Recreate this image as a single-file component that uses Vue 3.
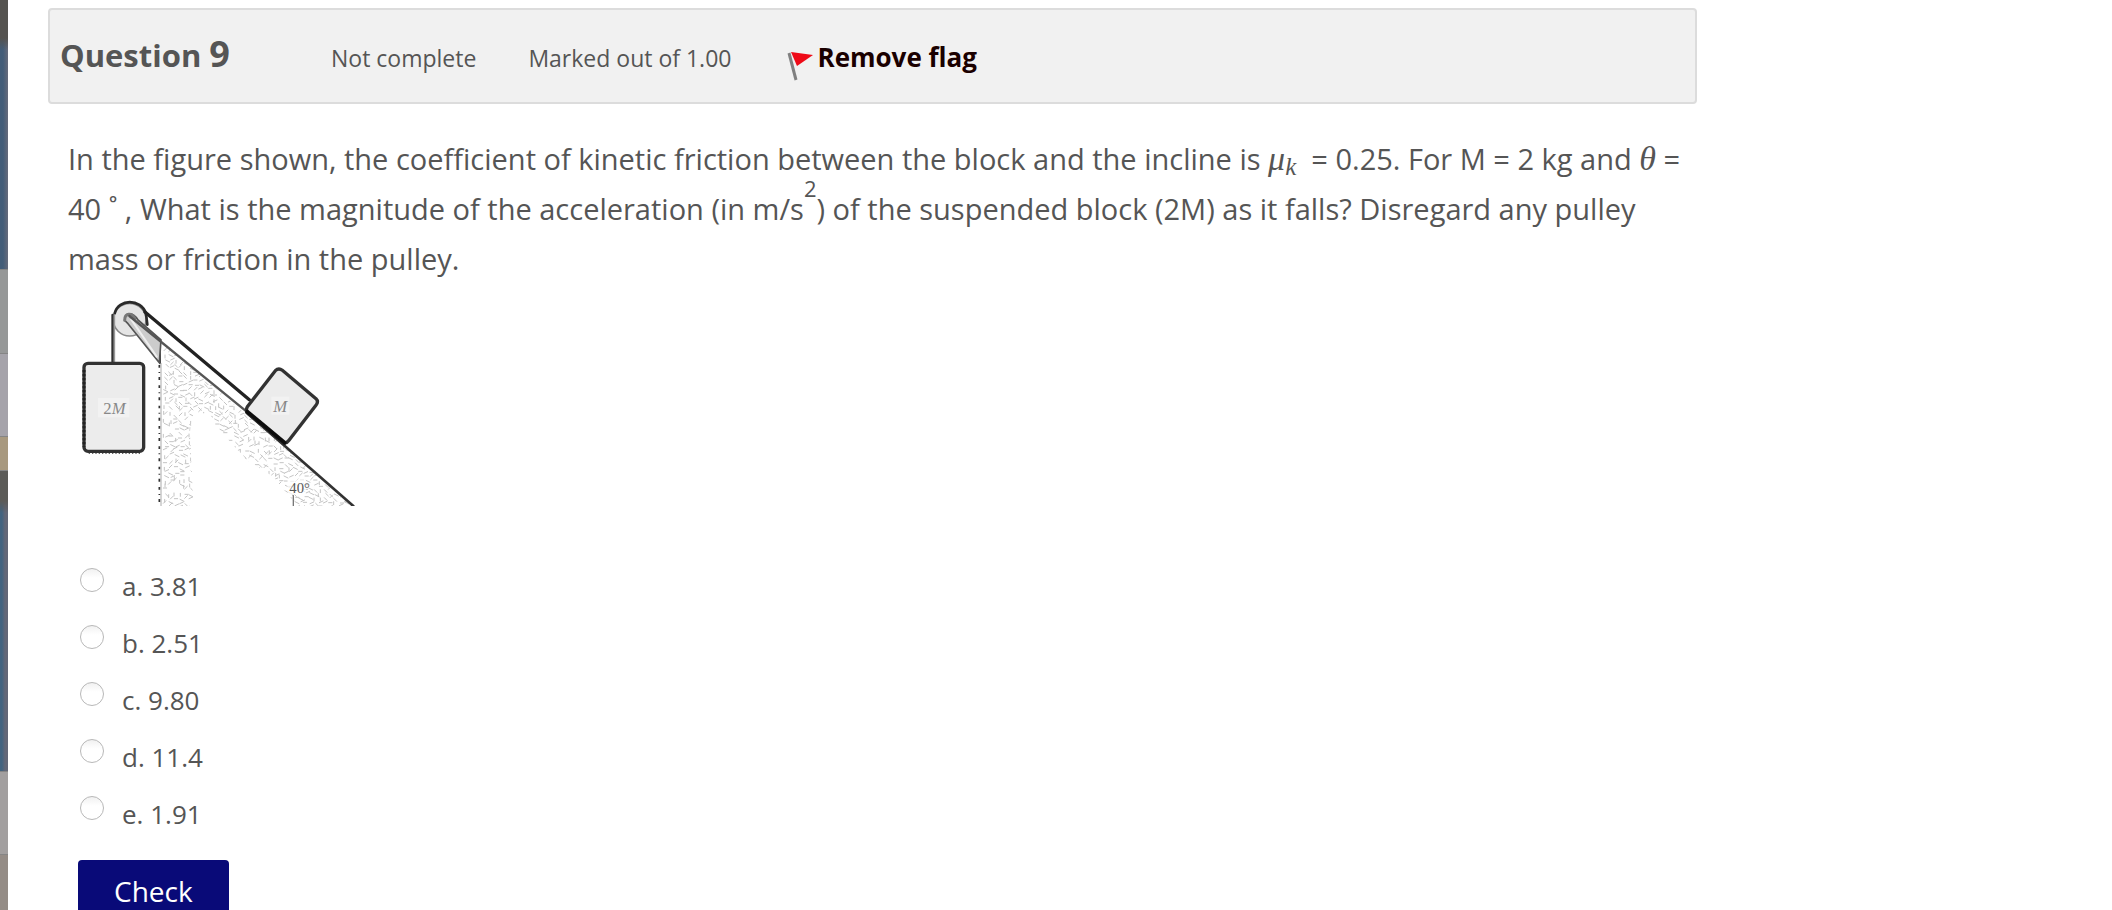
<script setup>
import { ref } from 'vue'

const answer = ref('')
const options = [
  { id: 'a', value: '3.81' },
  { id: 'b', value: '2.51' },
  { id: 'c', value: '9.80' },
  { id: 'd', value: '11.4' },
  { id: 'e', value: '1.91' }
]

// Stipple texture of the incline: short grey strokes in several directions.
let seed = 11
const random = () => {
  seed = (seed * 16807) % 2147483647
  return seed / 2147483647
}
const directions = [[10, 0], [8, 8], [8, -8], [0, 9], [12, 6], [11, -5]]
const grains = []
for (let y = 165; y < 650; y += 13) {
  for (let x = 310; x < 880; x += 15) {
    const [dx, dy] = directions[Math.floor(random() * directions.length)]
    const px = Math.round(x + random() * 8)
    const py = Math.round(y + random() * 8)
    if (random() > 0.1) grains.push(`M${px} ${py}l${dx} ${dy}`)
  }
}
const texture = grains.join('')
</script>

<template>
  <div class="page">
    <div class="backdrop" aria-hidden="true">
      <span class="stone dark"></span>
      <span class="stone grey"></span>
      <span class="stone lilac"></span>
      <span class="stone sand"></span>
      <span class="stone steel"></span>
      <span class="stone pale"></span>
      <span class="stone brown"></span>
    </div>
    <main class="question">
      <header class="info">
        <h1 class="title">Question <span class="number">9</span></h1>
        <span class="state">Not complete</span>
        <span class="grade">Marked out of 1.00</span>
        <a class="flag" href="#"><svg class="flag-icon" viewBox="0 0 28 32" aria-hidden="true">
          <path d="M2 4L9 31" stroke="#808080" stroke-width="3" />
          <path d="M4 3L26 6L10 17Z" fill="#ee0a17" />
        </svg>Remove flag</a>
      </header>

      <form class="content" @submit.prevent>
        <p class="text">
          In the figure shown, the coefficient of kinetic friction between the block and the incline is
          <span class="math">μ<sub>k</sub></span>&nbsp; = 0.25. For M = 2 kg and <i class="math">θ</i> =
          40&nbsp;˚&nbsp;, What is the magnitude of the acceleration (in m/s<sup>2</sup>) of the suspended block (2M) as
          it falls? Disregard any pulley mass or friction in the pulley.
        </p>

        <svg class="figure" viewBox="24 24 876 624" role="img" aria-label="Two blocks joined over a pulley on an incline">
          <defs>
            <clipPath id="wedge">
              <path d="M303 155L880 648H712L640 560L560 510L465 405L450 370H400L390 425L400 648H303Z" />
            </clipPath>
            <filter id="soft" x="-5%" y="-5%" width="110%" height="110%">
              <feGaussianBlur stdDeviation="2" />
            </filter>
          </defs>
          <g filter="url(#soft)" fill="none" stroke-linecap="round" stroke-linejoin="round">
            <path :d="texture" clip-path="url(#wedge)" stroke="#c4c4c4" stroke-width="3" />
            <path d="M300 150V220" stroke="#444" stroke-width="6" />
            <path d="M303 220V648" stroke="#aaa" stroke-width="3" />
            <path d="M298 225V648" stroke="#333" stroke-width="5" stroke-dasharray="8 13 3 12 9 16" stroke-linecap="butt" />
            <circle cx="209" cy="89" r="49" fill="#e5e5e5" stroke="#888" stroke-width="5" />
            <path d="M164 70C176 25 242 25 258 70L262 104" stroke="#2b2b2b" stroke-width="8" />
            <path d="M194 91C194 66 219 64 234 90L303 150L298 218L204 101Z" fill="#ccc" stroke="#555" stroke-width="5" />
            <path d="M194 91C194 68 216 67 224 86" stroke="#777" stroke-width="9" />
            <path d="M214 89L290 200" stroke="#eee" stroke-width="6" />
            <path d="M208 78L560 365" stroke="#555" stroke-width="7" />
            <path d="M255 66L568 329" stroke="#222" stroke-width="10" />
            <path d="M158 75V218" stroke="#333" stroke-width="8" />
            <path d="M163 75V218" stroke="#999" stroke-width="5" />
            <path d="M560 368L880 648" stroke="#333" stroke-width="8" />
            <rect x="72" y="220" width="179" height="264" rx="12" fill="#ececec" stroke="#333" stroke-width="10" />
            <path d="M72 240V470" stroke="#222" stroke-width="9" stroke-dasharray="7 5" stroke-linecap="butt" />
            <path d="M86 487H240" stroke="#333" stroke-width="8" stroke-dasharray="4 6" stroke-linecap="butt" />
            <path d="M646 242Q656 232 667 241L768 326Q776 334 769 344L687 451Q677 465 663 454L566 372Q555 363 562 350Z" fill="#ececec" stroke="#333" stroke-width="10" />
            <path d="M562 365L674 458" stroke="#111" stroke-width="12" />
            <rect x="114" y="324" width="94" height="58" fill="#f2f2f2" />
            <rect x="634" y="320" width="54" height="54" fill="#f2f2f2" />
            <path d="M700 616V648" stroke="#777" stroke-width="4" />
            <rect x="682" y="568" width="56" height="46" fill="#fff" fill-opacity="0.7" />
          </g>
          <g class="labels">
            <text x="130" y="371">2<tspan class="slanted">M</tspan></text>
            <text x="640" y="365" class="slanted">M</text>
            <text x="688" y="608" class="angle">40°</text>
          </g>
        </svg>

        <div class="answers" role="radiogroup" aria-label="Answer">
          <div v-for="option in options" :key="option.id" class="answer">
            <input :id="`answer-${option.id}`" v-model="answer" type="radio" name="answer" :value="option.id" />
            <label :for="`answer-${option.id}`">{{ option.id }}. {{ option.value }}</label>
          </div>
        </div>

        <button class="check" type="submit">Check</button>
      </form>
    </main>
  </div>
</template>

<style>
body {
  margin: 0;
  background: #fff;
}
</style>

<style scoped>
.page {
  display: flex;
  height: 100vh;
  overflow-y: auto;
  scrollbar-width: none;
  color: #555;
  font-family: "Open Sans", "Noto Sans", sans-serif;
}

.backdrop {
  display: flex;
  flex: 0 0 8px;
  flex-direction: column;
  height: 100vh;
}

.stone {
  flex: 83 0 0;
  border-bottom: 1px solid #858585;
  box-sizing: border-box;
}

.dark {
  flex-grow: 271;
  background: linear-gradient(#555350 0 38px, transparent 50px), linear-gradient(90deg, #435d78 3px, #666b7b);
}

.grey {
  background: #969898;
}

.lilac {
  background: #a5a3aa;
}

.sand {
  flex-grow: 33;
  background: #a8997f;
}

.steel {
  flex-grow: 302;
  background: linear-gradient(#5c5b58 0 30px, transparent 42px), linear-gradient(90deg, #42637f 2px, #626777 5px);
}

.pale {
  background: #a29f9f;
}

.brown {
  flex-grow: 55;
  border-bottom: 0;
  background: #948c86;
}

.question {
  flex: 1;
  margin: 8px 415px 0 40px;
}

.info {
  display: flex;
  align-items: baseline;
  box-sizing: border-box;
  height: 96px;
  padding: 20px 10px 0;
  border: 2px solid #dcdcdc;
  border-radius: 4px;
  background: #f1f1f1;
  font-size: 23px;
}

.title {
  width: 271px;
  margin: 0;
  font-size: 31px;
  line-height: 48px;
}

.number {
  font-size: 36px;
}

.grade {
  margin-left: 52px;
}

.flag {
  margin-left: 56px;
  color: #1a0000;
  font-size: 26px;
  font-weight: 700;
  text-decoration: none;
}

.flag-icon {
  width: 28px;
  height: 32px;
  margin-right: 2px;
  vertical-align: -14px;
}

.content {
  display: flex;
  flex-direction: column;
  align-items: flex-start;
  padding: 30px 0 30px 20px;
}

.text {
  margin: 0;
  font-size: 29px;
  line-height: 50px;
}

.math {
  font-family: "Liberation Serif", serif;
  font-size: 34px;
  font-style: italic;
  line-height: 1;
}

sub,
sup {
  font-size: 22px;
  line-height: 0;
}

sub {
  font-size: 25px;
  vertical-align: -5px;
}

sup {
  vertical-align: 23px;
}

.figure {
  width: 292px;
  height: 208px;
  margin-top: 14px;
}

.labels {
  fill: #888;
  font-family: "Liberation Serif", serif;
  font-size: 50px;
}

.slanted {
  font-style: italic;
}

.angle {
  fill: #555;
  font-size: 44px;
}

.answers {
  margin: 54px 0 0 12px;
}

.answer {
  display: flex;
  align-items: flex-start;
  height: 57px;
}

.answer input {
  appearance: none;
  width: 24px;
  height: 24px;
  margin: 8px 18px 0 0;
  border: 1px solid #b8b8b8;
  border-radius: 50%;
  background: linear-gradient(#f1f1f1, #fff 40%);
}

.answer input:checked {
  background: radial-gradient(#090a78 5px, #fff 6px);
}

.answer label {
  padding-top: 8px;
  font-size: 26px;
  line-height: 36px;
}

.check {
  margin: 15px 0 0 10px;
  padding: 8px 36px;
  border: 0;
  border-radius: 4px;
  background: #090a78;
  color: #fff;
  font: 28px/46px "Open Sans", "Noto Sans", sans-serif;
}
</style>
